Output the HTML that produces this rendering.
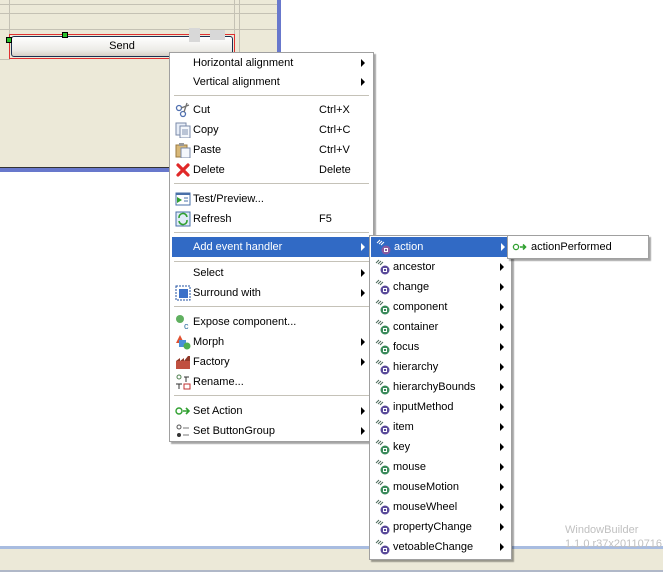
<!DOCTYPE html>
<html><head><meta charset="utf-8"><style>
*{margin:0;padding:0;box-sizing:border-box}
body{width:663px;height:572px;position:relative;background:#fff;overflow:hidden;font-family:"Liberation Sans","DejaVu Sans",sans-serif;font-size:11px;color:#000}
.a{position:absolute}
.menu{position:absolute;background:#fff;border:1px solid #a0a0a0;box-shadow:2px 2px 1px rgba(0,0,0,.35)}
.it{position:absolute;left:0;right:0;height:20px;line-height:20px}
.it .t{position:absolute}
.it .k{position:absolute}
.hl{background:#316ac5;color:#fff}
.ar{position:absolute;width:0;height:0;border-top:4px solid transparent;border-bottom:4px solid transparent;border-left:4px solid #000;top:6px}
.hl .ar{border-left-color:#fff}
.sep{position:absolute;left:4px;right:4px;height:1px;background:#c5c2b8}
.ic{position:absolute;left:5px;top:2px}
.dg{position:absolute;left:4px;top:2px;width:18px;height:16px}
</style></head><body>
<!-- designer panel -->
<div class="a" style="left:0;top:0;width:277px;height:168px;background:#ece9d8"></div>
<div class="a" style="left:0;top:4px;width:277px;height:1px;background:#c4c1b4"></div>
<div class="a" style="left:0;top:13px;width:277px;height:1px;background:#c4c1b4"></div>
<div class="a" style="left:0;top:29px;width:277px;height:1px;background:#c4c1b4"></div>
<div class="a" style="left:9px;top:0;width:1px;height:60px;background:#c4c1b4"></div>
<div class="a" style="left:234px;top:0;width:1px;height:60px;background:#c4c1b4"></div>
<div class="a" style="left:239px;top:0;width:1px;height:60px;background:#c4c1b4"></div>
<div class="a" style="left:0;top:59px;width:10px;height:1px;background:#c4c1b4"></div>
<div class="a" style="left:277px;top:0;width:4px;height:172px;background:#6878cc"></div>
<div class="a" style="left:0;top:167px;width:281px;height:1px;background:#333"></div>
<div class="a" style="left:0;top:168px;width:281px;height:4px;background:#6878cc"></div>
<!-- button -->
<div class="a" style="left:9px;top:34px;width:226px;height:25px;border:1px solid #e03030"></div>
<div class="a" style="left:11px;top:36px;width:222px;height:21px;border:1px solid #1c3050;border-radius:3px;background:linear-gradient(#fff,#ecebe6 70%,#d6d0c5);text-align:center;line-height:19px;font-size:11px">Send</div>
<div class="a" style="left:6px;top:37px;width:6px;height:6px;background:#2cc02c;border:1px solid #000"></div>
<div class="a" style="left:62px;top:32px;width:6px;height:6px;background:#2cc02c;border:1px solid #000"></div>
<div class="a" style="left:189px;top:28px;width:11px;height:14px;background:#d8d8d8"></div>
<div class="a" style="left:210px;top:30px;width:15px;height:10px;background:#d8d8d8"></div>
<!-- bottom bar -->
<div class="a" style="left:0;top:546px;width:663px;height:3px;background:#a8bce0"></div>
<div class="a" style="left:0;top:549px;width:663px;height:21px;background:#ece9d8"></div>
<div class="a" style="left:0;top:570px;width:663px;height:2px;background:#b0b8c8"></div>
<div class="a" style="left:565px;top:523px;color:#c0c0c0;font-size:11px;line-height:14px">WindowBuilder<br>1.1.0.r37x20110716</div>

<!-- main menu -->
<div class="menu" style="left:169px;top:52px;width:205px;height:390px">
 <div class="it" style="top:0px"><span class="t" style="left:23px">Horizontal alignment</span><span class="ar" style="left:191px"></span></div>
 <div class="it" style="top:19px"><span class="t" style="left:23px">Vertical alignment</span><span class="ar" style="left:191px"></span></div>
 <div class="sep" style="top:42px"></div>
 <div class="it" style="top:47px"><svg class="ic" width="16" height="16"><circle cx="4" cy="6" r="2.5" fill="none" stroke="#5070b0" stroke-width="1.3"/><circle cx="8" cy="12" r="2.5" fill="none" stroke="#5070b0" stroke-width="1.3"/><path d="M6 6 L14 3 M9 10 L12 1" stroke="#707070" stroke-width="1.3"/></svg><span class="t" style="left:23px">Cut</span><span class="k" style="left:149px">Ctrl+X</span></div>
 <div class="it" style="top:67px"><svg class="ic" width="16" height="16"><rect x="1" y="1" width="10" height="12" fill="#e8eef8" stroke="#7a8aa8"/><rect x="5" y="4" width="10" height="12" fill="#f4f7fc" stroke="#7a8aa8"/><path d="M7 8h6M7 10h6M7 12h6" stroke="#8090b0"/></svg><span class="t" style="left:23px">Copy</span><span class="k" style="left:149px">Ctrl+C</span></div>
 <div class="it" style="top:87px"><svg class="ic" width="16" height="16"><rect x="1" y="3" width="11" height="12" fill="#d8b878" stroke="#9a7a40"/><rect x="4" y="1" width="5" height="3" fill="#999"/><rect x="6" y="6" width="9" height="10" fill="#f4f7fc" stroke="#7a8aa8"/></svg><span class="t" style="left:23px">Paste</span><span class="k" style="left:149px">Ctrl+V</span></div>
 <div class="it" style="top:107px"><svg class="ic" width="16" height="16"><path d="M3 3 L13 13 M13 3 L3 13" stroke="#e02828" stroke-width="3.2" stroke-linecap="round"/></svg><span class="t" style="left:23px">Delete</span><span class="k" style="left:149px">Delete</span></div>
 <div class="sep" style="top:130px"></div>
 <div class="it" style="top:136px"><svg class="ic" width="16" height="16"><rect x="1" y="2" width="14" height="12" fill="#fff" stroke="#4a70a8"/><rect x="1" y="2" width="14" height="2" fill="#4a70a8"/><path d="M2 6 L7 9 L2 12Z" fill="#30a030"/><path d="M9 7h4M9 10h4" stroke="#4a70a8"/></svg><span class="t" style="left:23px">Test/Preview...</span></div>
 <div class="it" style="top:156px"><svg class="ic" width="16" height="16"><rect x="1" y="1" width="14" height="14" fill="#e0ecf8" stroke="#4a70a8"/><path d="M4 7 A4 4 0 0 1 12 6 M12 9 A4 4 0 0 1 4 10" stroke="#30a030" stroke-width="1.6" fill="none"/></svg><span class="t" style="left:23px">Refresh</span><span class="k" style="left:149px">F5</span></div>
 <div class="sep" style="top:179px"></div>
 <div class="it hl" style="top:184px;left:2px;right:2px;height:20px"><span class="t" style="left:21px">Add event handler</span><span class="ar" style="left:189px"></span></div>
 <div class="sep" style="top:208px"></div>
 <div class="it" style="top:210px"><span class="t" style="left:23px">Select</span><span class="ar" style="left:191px"></span></div>
 <div class="it" style="top:230px"><svg class="ic" width="16" height="16"><rect x="1" y="1" width="14" height="14" fill="none" stroke="#2050a0" stroke-dasharray="2 1"/><rect x="4" y="4" width="9" height="9" fill="#3a70c8"/></svg><span class="t" style="left:23px">Surround with</span><span class="ar" style="left:191px"></span></div>
 <div class="sep" style="top:253px"></div>
 <div class="it" style="top:259px"><svg class="ic" width="16" height="16"><circle cx="5" cy="5" r="4" fill="#60b060"/><text x="9" y="15" font-size="9" fill="#3070a0" font-family="Liberation Sans">c</text></svg><span class="t" style="left:23px">Expose component...</span></div>
 <div class="it" style="top:279px"><svg class="ic" width="16" height="16"><path d="M1 9 L5 1 L9 9Z" fill="#e05030"/><rect x="4" y="6" width="7" height="7" fill="#4a90d8"/><circle cx="12" cy="12" r="3.5" fill="#50b050"/></svg><span class="t" style="left:23px">Morph</span><span class="ar" style="left:191px"></span></div>
 <div class="it" style="top:299px"><svg class="ic" width="16" height="16"><rect x="1" y="7" width="14" height="8" fill="#c05040"/><path d="M1 7 L5 4 L5 7 L9 4 L9 7 L13 2 L15 2 L15 7Z" fill="#903828"/></svg><span class="t" style="left:23px">Factory</span><span class="ar" style="left:191px"></span></div>
 <div class="it" style="top:319px"><svg class="ic" width="16" height="16"><circle cx="4" cy="3" r="2" fill="none" stroke="#508050"/><path d="M1 10h6M4 10v5M9 3h5M11 3v5" stroke="#333"/><rect x="9" y="10" width="6" height="5" fill="#fff" stroke="#c03030"/></svg><span class="t" style="left:23px">Rename...</span></div>
 <div class="sep" style="top:342px"></div>
 <div class="it" style="top:348px"><svg class="ic" width="16" height="16"><circle cx="4" cy="8" r="3" fill="none" stroke="#30a030" stroke-width="1.4"/><path d="M8 8h5M11 5l3 3-3 3" stroke="#30a030" stroke-width="1.6" fill="none"/></svg><span class="t" style="left:23px">Set Action</span><span class="ar" style="left:191px"></span></div>
 <div class="it" style="top:368px"><svg class="ic" width="16" height="16"><circle cx="4" cy="4" r="2" fill="none" stroke="#555"/><circle cx="4" cy="12" r="2" fill="#333"/><path d="M8 5h6M8 12h6" stroke="#777"/></svg><span class="t" style="left:23px">Set ButtonGroup</span><span class="ar" style="left:191px"></span></div>
</div>

<!-- submenu -->
<div class="menu" style="left:369px;top:235px;width:143px;height:325px" id="sub">
</div>
<!-- third menu -->
<div class="menu" style="left:507px;top:235px;width:142px;height:24px">
 <div class="it" style="top:1px"><svg class="ic" width="16" height="16" style="left:4px"><circle cx="4" cy="8" r="2.6" fill="none" stroke="#30a030" stroke-width="1.3"/><path d="M8 8h5M11 5.5l2.5 2.5-2.5 2.5" stroke="#30a030" stroke-width="1.6" fill="none"/></svg><span class="t" style="left:23px">actionPerformed</span></div>
</div>
<script>
var items=[["action","i"],["ancestor","i"],["change","i"],["component","c"],["container","c"],["focus","c"],["hierarchy","i"],["hierarchyBounds","c"],["inputMethod","i"],["item","i"],["key","c"],["mouse","c"],["mouseMotion","c"],["mouseWheel","i"],["propertyChange","i"],["vetoableChange","i"]];
var h="";
items.forEach(function(x,n){
 var col=x[1]=="c"?"#3a8a5a":"#5a4a9a";
 var hl=n==0;
 h+='<div class="it'+(hl?' hl':'')+'" style="top:'+(1+n*20)+'px;'+(hl?'left:1px;right:1px':'')+'"><svg class="dg" width="18" height="16"><path d="M2 4 L5 1 M4 5 L7 2 M6 6 L9 3" stroke="'+(hl?'#fff':'#4a6a5a')+'" stroke-width="1"/><circle cx="11" cy="11" r="4.5" fill="'+(hl?'#8a5aa0':col)+'"/><rect x="9" y="9" width="4" height="4" fill="#fff"/><rect x="10" y="10" width="2" height="2" fill="'+(hl?'#8a5aa0':col)+'"/></svg><span class="t" style="left:23px">'+x[0]+'</span><span class="ar" style="left:130px"></span></div>';
});
document.getElementById("sub").innerHTML=h;
</script>
</body></html>
